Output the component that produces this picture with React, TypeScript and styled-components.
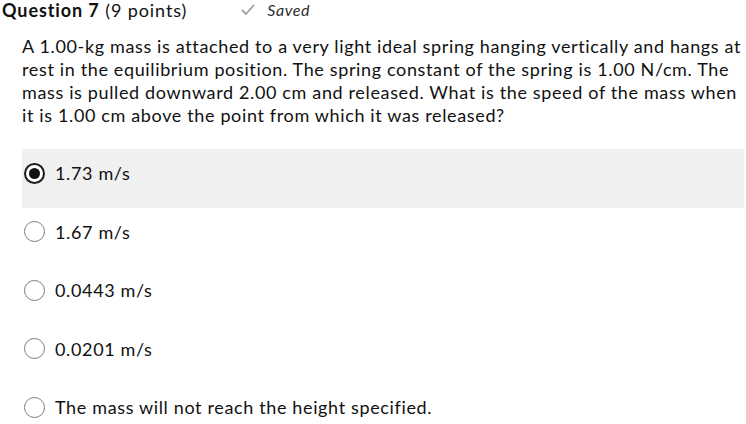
import React, { useState } from "react";
import styled, { createGlobalStyle } from "styled-components";

const GlobalStyle = createGlobalStyle`
  html, body {
    margin: 0;
    padding: 0;
    background: #ffffff;
  }
  body {
    font-family: Lato, "Liberation Sans", sans-serif;
    color: #2d3b45;
  }
`;

const options = [
  "1.73 m/s",
  "1.67 m/s",
  "0.0443 m/s",
  "0.0201 m/s",
  "The mass will not reach the height specified.",
];

const App = () => {
  const [selected, setSelected] = useState(0);

  return (
    <Page>
      <GlobalStyle />
      <Header>
        <Title>
          <strong>Question 7</strong> (9 points)
        </Title>
        <SavedTag>
          <CheckIcon viewBox="0 0 14 12">
            <path d="M1.5 6.5 L5 10 L12.5 1.5" />
          </CheckIcon>
          <em>Saved</em>
        </SavedTag>
      </Header>
      <Body>
        <Prompt>
          A 1.00-kg mass is attached to a very light ideal spring hanging
          vertically and hangs at rest in the equilibrium position. The spring
          constant of the spring is 1.00 N/cm. The mass is pulled downward 2.00
          cm and released. What is the speed of the mass when it is 1.00 cm
          above the point from which it was released?
        </Prompt>
        <OptionList>
          {options.map((text, i) => (
            <OptionRow
              key={text}
              $active={selected === i}
              onClick={() => setSelected(i)}
            >
              <Radio $checked={selected === i} />
              <OptionText>{text}</OptionText>
            </OptionRow>
          ))}
        </OptionList>
      </Body>
    </Page>
  );
};

const Page = styled.div`
  width: 746px;
  height: 424px;
  overflow: hidden;
  background: #fff;
`;

const Header = styled.div`
  display: flex;
  align-items: center;
  gap: 54px;
  padding: 0 0 0 2px;
  height: 20px;
`;

const Title = styled.div`
  font-size: 18px;
  letter-spacing: 0.9px;
  color: #111;
  line-height: 20px;

  strong {
    font-weight: 700;
  }
`;

const SavedTag = styled.div`
  display: flex;
  align-items: center;
  gap: 12px;
  font-size: 16px;
  letter-spacing: 0.6px;
  color: #2d2d2d;
  line-height: 20px;
`;

const CheckIcon = styled.svg`
  width: 14px;
  height: 12px;
  fill: none;
  stroke: #a0a0a0;
  stroke-width: 1.8;
  stroke-linecap: round;
  stroke-linejoin: round;
`;

const Body = styled.div`
  padding: 15px 0 0 22px;
`;

const Prompt = styled.p`
  margin: 0 0 22px;
  font-size: 18px;
  letter-spacing: 0.64px;
  line-height: 23px;
  color: #111;
`;

const OptionList = styled.div`
  display: flex;
  flex-direction: column;
`;

const OptionRow = styled.label<{ $active: boolean }>`
  box-sizing: border-box;
  display: flex;
  align-items: center;
  gap: 10px;
  height: 58.5px;
  margin-right: 2px;
  padding: 0 0 10px 2px;
  background: ${({ $active }) => ($active ? "#f0f0f0" : "transparent")};
  cursor: pointer;
`;

const Radio = styled.span<{ $checked: boolean }>`
  box-sizing: border-box;
  flex: none;
  width: 21px;
  height: 21px;
  border-radius: 50%;
  background: #fff;
  border: ${({ $checked }) =>
    $checked ? "2px solid #1a1a1a" : "1px solid #7a7a7a"};
  display: flex;
  align-items: center;
  justify-content: center;

  &::after {
    content: "";
    display: ${({ $checked }) => ($checked ? "block" : "none")};
    width: 11px;
    height: 11px;
    border-radius: 50%;
    background: #111;
  }
`;

const OptionText = styled.span`
  font-size: 18px;
  letter-spacing: 0.64px;
  color: #111;
`;

export default App;
